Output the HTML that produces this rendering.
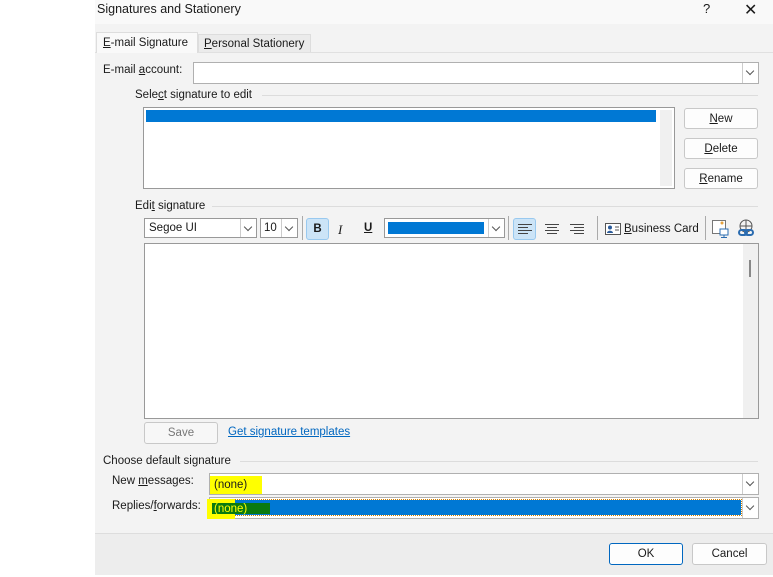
<!DOCTYPE html>
<html><head><style>
*{box-sizing:border-box;margin:0;padding:0}
body{width:773px;height:577px;background:#fff;position:relative;font-family:"Liberation Sans",sans-serif;font-size:11.5px;color:#1a1a1a;overflow:hidden}
.a{position:absolute}
.box{position:absolute;background:#fff;border:1px solid #b0b0b0}
.btn{position:absolute;background:#fdfdfd;border:1px solid #c8c8c8;border-radius:3px;text-align:center;line-height:20px;font-size:11.5px}
.dd{position:absolute;right:0;top:0;bottom:0;width:16px;border-left:1px solid #ccc;background:#fff}
.dd:after{content:"";position:absolute;left:4px;top:5px;width:5px;height:5px;border-right:1px solid #555;border-bottom:1px solid #555;transform:rotate(45deg)}
.line{position:absolute;height:1px;background:#dcdcdc}
u{text-decoration:underline}
</style></head><body>
<div class="a" style="left:95px;top:0;width:678px;height:577px;background:#f3f3f3"></div>
<div class="a" style="left:95px;top:0;width:678px;height:24px;background:#f9f9f9"></div>
<div class="a" style="left:97px;top:2px;font-size:12.5px">Signatures and Stationery</div>
<div class="a" style="left:703px;top:1px;font-size:13px">?</div>
<div class="a" style="left:744px;top:0px;font-size:16px">✕</div>
<div class="a" style="left:95px;top:52px;width:678px;height:1px;background:#e0e0e0"></div>
<div class="a" style="left:96px;top:32px;width:102px;height:21px;background:#f9f9f9;border:1px solid #ddd;border-bottom:none"></div>
<div class="a" style="left:103px;top:37px"><u>E</u>-mail Signature</div>
<div class="a" style="left:198px;top:34px;width:113px;height:18px;background:#ebebeb;border:1px solid #ddd;border-bottom:none"></div>
<div class="a" style="left:204px;top:38px"><u>P</u>ersonal Stationery</div>
<div class="a" style="left:103px;top:64px">E-mail <u>a</u>ccount:</div>
<div class="box" style="left:193px;top:62px;width:566px;height:22px"><div class="dd"></div></div>
<div class="a" style="left:135px;top:89px">Sele<u>c</u>t signature to edit</div>
<div class="line" style="left:262px;top:95px;width:496px"></div>
<div class="box" style="left:143px;top:107px;width:532px;height:82px;border-color:#999"></div>
<div class="a" style="left:146px;top:110px;width:510px;height:12px;background:#0078d4"></div>
<div class="a" style="left:660px;top:110px;width:12px;height:76px;background:#f0f0f0"></div>
<div class="btn" style="left:684px;top:108px;width:74px;height:21px;line-height:21px"><u>N</u>ew</div>
<div class="btn" style="left:684px;top:138px;width:74px;height:21px;line-height:21px"><u>D</u>elete</div>
<div class="btn" style="left:684px;top:168px;width:74px;height:21px;line-height:21px"><u>R</u>ename</div>
<div class="a" style="left:135px;top:200px">Edi<u>t</u> signature</div>
<div class="line" style="left:212px;top:206px;width:546px"></div>
<div class="box" style="left:144px;top:218px;width:113px;height:20px;border-color:#999;padding:3px 4px">Segoe UI<div class="dd"></div></div>
<div class="box" style="left:260px;top:218px;width:38px;height:20px;border-color:#999;padding:3px 3px">10<div class="dd"></div></div>
<div class="a" style="left:302px;top:216px;width:1px;height:24px;background:#aaa"></div>
<div class="a" style="left:306px;top:218px;width:23px;height:22px;background:#cce4f7;border:1px solid #99c9ef;border-radius:3px;font-weight:bold;text-align:center;line-height:21px">B</div>
<div class="a" style="left:338px;top:222px;font-style:italic;font-family:'Liberation Serif',serif;font-size:13px">I</div>
<div class="a" style="left:364px;top:222px;font-weight:bold;text-decoration:underline">U</div>
<div class="box" style="left:384px;top:218px;width:121px;height:20px;border-color:#999"><div class="a" style="left:3px;top:3px;width:96px;height:12px;background:#0078d4"></div><div class="dd"></div></div>
<div class="a" style="left:508px;top:216px;width:1px;height:24px;background:#aaa"></div>
<div class="a" style="left:513px;top:218px;width:23px;height:22px;background:#cce4f7;border:1px solid #99c9ef;border-radius:3px"></div>
<svg class="a" style="left:516px;top:222px" width="70" height="16"><g stroke="#444" stroke-width="1"><path d="M2 2.5h14M2 5.5h10M2 8.5h14M2 11.5h10"/><path d="M29 2.5h14M31 5.5h10M29 8.5h14M31 11.5h10"/><path d="M54 2.5h14M58 5.5h10M54 8.5h14M58 11.5h10"/></g></svg>
<div class="a" style="left:597px;top:216px;width:1px;height:24px;background:#aaa"></div>
<svg class="a" style="left:605px;top:222px" width="16" height="14"><rect x="0.5" y="1.5" width="15" height="11" fill="#fff" stroke="#555"/><circle cx="5" cy="5.5" r="2" fill="#2b5b9a"/><path d="M2 11c0-3 6-3 6 0z" fill="#2b5b9a"/><path d="M10 5h4M10 8h4" stroke="#555"/></svg>
<div class="a" style="left:624px;top:223px"><u>B</u>usiness Card</div>
<div class="a" style="left:705px;top:216px;width:1px;height:24px;background:#aaa"></div>
<svg class="a" style="left:712px;top:220px" width="18" height="18"><rect x="0.5" y="0.5" width="13" height="13" fill="#fff" stroke="#777"/><circle cx="10" cy="3" r="1.5" fill="#e8a33d"/><rect x="8" y="9" width="8" height="6" fill="#fff" stroke="#2b6cb0"/><path d="M12 15v2M9 17.5h6" stroke="#2b6cb0"/></svg>
<svg class="a" style="left:738px;top:219px" width="18" height="19"><circle cx="8" cy="7" r="6" fill="none" stroke="#555"/><path d="M2 7h12M8 1v12" stroke="#555"/><rect x="1" y="11" width="8" height="5" rx="2.5" fill="none" stroke="#2b6cb0" stroke-width="2"/><rect x="7" y="11" width="8" height="5" rx="2.5" fill="none" stroke="#2b6cb0" stroke-width="2"/></svg>
<div class="box" style="left:144px;top:243px;width:615px;height:176px;border-color:#999"></div>
<div class="a" style="left:743px;top:244px;width:15px;height:174px;background:#f0f0f0"></div>
<div class="a" style="left:749px;top:260px;width:2px;height:17px;background:#888"></div>
<div class="btn" style="left:144px;top:422px;width:74px;height:22px;color:#777;background:#f7f7f7;line-height:21px">Save</div>
<div class="a" style="left:228px;top:426px;color:#0067c0;text-decoration:underline">Get signature templates</div>
<div class="a" style="left:103px;top:455px">Choose default signature</div>
<div class="line" style="left:240px;top:461px;width:518px"></div>
<div class="a" style="left:112px;top:475px">New <u>m</u>essages:</div>
<div class="a" style="left:112px;top:500px">Replies/<u>f</u>orwards:</div>
<div class="box" style="left:209px;top:473px;width:550px;height:22px"><div class="dd"></div></div>
<div class="a" style="left:210px;top:476px;width:52px;height:18px;background:#ffff00"></div>
<div class="a" style="left:214px;top:479px">(none)</div>
<div class="box" style="left:209px;top:497px;width:550px;height:22px"><div class="a" style="left:2px;top:2px;width:529px;height:15px;background:#0078d4;outline:1px dotted #d08000"></div><div class="dd"></div></div>
<div class="a" style="left:207px;top:499px;width:28px;height:20px;background:#ffff00"></div>
<div class="a" style="left:212px;top:503px;width:58px;height:11px;background:#0a7a10"></div>
<div class="a" style="left:214px;top:503px;color:#ffff00">(none)</div>
<div class="a" style="left:95px;top:533px;width:678px;height:44px;background:#ededed;border-top:1px solid #ddd"></div>
<div class="btn" style="left:609px;top:543px;width:74px;height:22px;border:1px solid #0067c0;line-height:21px">OK</div>
<div class="btn" style="left:692px;top:543px;width:75px;height:22px;line-height:21px">Cancel</div>
<div class="a" style="left:95px;top:575px;width:678px;height:2px;background:#fff"></div>
</body></html>
